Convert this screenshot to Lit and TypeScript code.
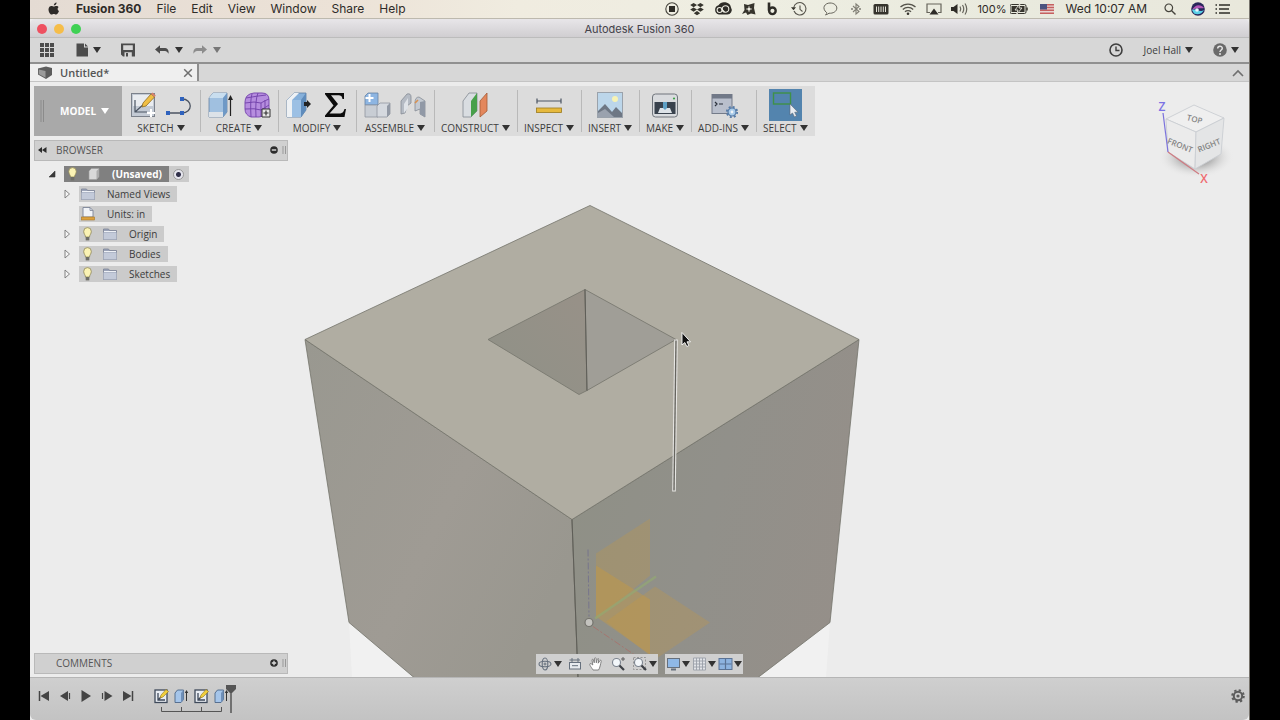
import { LitElement, html, svg, css, TemplateResult, SVGTemplateResult } from "lit";
import { customElement, state } from "lit/decorators.js";

/* Every glyph is drawn around its own centre, so (0,0) is the middle of its box. */
const icon = (w: number, h: number, body: SVGTemplateResult) =>
  html`<svg class="icon" width=${w} height=${h} viewBox="${-w / 2} ${-h / 2} ${w} ${h}" aria-hidden="true">${body}</svg>`;

const caret = html`<span class="caret"></span>`;

const apple = svg`<path fill="#2e2b28" d="M2.6-6.6C2.7-5.3 1.4-3.6-.2-3.7C-.3-5 1-6.5 2.6-6.6ZM4.6-1.9C3.2-1 3.3 1.3 5 2.1C4.4 3.8 3.2 5.6 2 5.6C1.1 5.6.8 5.1-.2 5.1C-1.200 5.100-1.600 5.600-2.400 5.600C-4 5.600-5.600 2.500-5.500.3C-5.400-1.800-4.100-3-2.600-3C-1.600-3-.9-2.400-.2-2.400C.5-2.400 1.300-3.100 2.500-3.100C3.400-3.100 4.200-2.600 4.600-1.900Z"/>`;

const status: Record<string, [number, SVGTemplateResult]> = {
  "Screen recording": [18, svg`<circle r="6.2" fill="none" stroke="#45433c" stroke-width="1.1"/><rect x="-3" y="-3" width="6" height="6" fill="#2e2c27"/>`],
  Dropbox: [16, svg`<g fill="#36342d"><path d="M-3.400-6L0-4L-3.400-1.800L-6.800-4ZM3.400-6L6.800-4L3.400-1.800L0-4ZM-3.400-1.600L0 .5L-3.400 2.700L-6.800.5ZM3.400-1.600L6.800.5L3.400 2.700L0 .5ZM0 2L3.200 4.200L0 6.200L-3.200 4.200Z"/></g><circle r="1.300" cy="-1.700" fill="#efeee4"/>`],
  "Creative Cloud": [20, svg`<path fill="#2e2c27" d="M-4 5.500A4.800 4.800 0 0 1-4.500-3.800A6.800 6.300 0 0 1 8-1.500A4.500 4.500 0 0 1 4 5.500Z"/><g fill="none" stroke="#efeee4" stroke-width="1.100"><circle cx="-3.400" cy="1" r="2.500"/><circle cx="2.500" cy="0" r="3.300"/><path d="M-1.500 0L1.500 3"/></g>`],
  Antivirus: [16, svg`<path fill="#36342d" d="M-5-5L-1-4L5.500-6L5-1L6.500 5.500L2 4.500L-1.500 6L-3 3.500L-7 5L-4.500 1Z"/><circle r="1.500" fill="#efeee4"/><path d="M0-3V3M-3 0H3" stroke="#efeee4" stroke-width=".7"/>`],
  Beats: [14, svg`<path d="M-3-6.500V1.500" stroke="#2e2c27" stroke-width="2.600"/><circle cx=".4" cy="1.800" r="3.300" fill="none" stroke="#2e2c27" stroke-width="2.400"/>`],
  "Time Machine": [24, svg`<g fill="none" stroke="#55534b" stroke-width="1.100"><path d="M-5 2A6.200 6.200 0 1 0-5.300-1.500"/><path d="M1-3.500V.3L3.500 2.500"/></g><path d="M-8-1.800H-3L-5.500 1.200Z" fill="#36342d"/>`],
  Messages: [22, svg`<path d="M-4.500 5.800C-3.500 5.300-3.200 4.700-3.200 3.800C-9-1 -5-6 0-6C4-6 6.800-3.700 6.800-.9C6.800 2.500 3 4.600-1 4.200C-2 5.200-3.200 5.700-4.500 5.800Z" fill="none" stroke="#66645b" stroke-width="1"/>`],
  Bluetooth: [14, svg`<path d="M-3-3L3 2.500L0 5V-5L3-2.500L-3 3" fill="none" stroke="#807e74" stroke-width="1.100"/><circle cx="-4" r="1" fill="#807e74"/><circle cx="4" r="1" fill="#807e74"/>`],
  Memory: [20, svg`<rect x="-7.500" y="-5" width="15" height="10.500" rx="1.500" fill="#36342d"/><path d="M-4.500-2.500V3M-2.300-2.500V3M0-2.500V3M2.300-2.500V3M4.500-2.500V3" stroke="#e5e4da" stroke-width="1"/>`],
  "Wi-Fi": [18, svg`<g fill="none" stroke="#55534b" stroke-width="1.300"><path d="M-7.500-2A11 11 0 0 1 7.500-2"/><path d="M-5.200.5A7.500 7.500 0 0 1 5.200.5"/><path d="M-3 2.800A4.200 4.200 0 0 1 3 2.800"/></g><circle cy="4.800" r="1.300" fill="#36342d"/>`],
  AirPlay: [18, svg`<path d="M-4 3.500H-7V-5H7V3.500H4" fill="none" stroke="#66645b" stroke-width="1.200"/><path d="M0-.5L4.500 5.500H-4.500Z" fill="#2e2c27"/>`],
  Volume: [18, svg`<path fill="#2e2c27" d="M-9-2H-6.500L-2.500-5V5L-6.500 2H-9Z"/><g fill="none" stroke="#66645b" stroke-width="1.200"><path d="M0-2.500Q1.500 0 0 2.500"/><path d="M2.500-4Q5 0 2.500 4"/><path d="M5-5.500Q8.500 0 5 5.500"/></g>`],
};

const battery = svg`<rect x="-9" y="-4.500" width="16" height="9" rx="1.500" fill="none" stroke="#36342d"/><rect x="-7.500" y="-3" width="13" height="6" fill="#36342d"/><path d="M8-1.500V1.500" stroke="#36342d" stroke-width="1.500"/><path d="M1-5.500L-4 1H-1L-2.500 5.500L3-1H0Z" fill="#36342d" stroke="#ecebe1" stroke-width=".9"/>`;
const flag = svg`<rect x="-7" y="-5" width="14" height="10" fill="#e8d5d2"/><path d="M-7-4.300H7M-7-1.500H7M-7 1.300H7M-7 4.200H7" stroke="#c5605f" stroke-width="1.400"/><rect x="-7" y="-5" width="7" height="5.500" fill="#4b5480"/>`;
const search = svg`<circle cx="-1.200" cy="-1.200" r="3.800" fill="none" stroke="#45433c" stroke-width="1.200"/><path d="M1.700 1.700L5.500 5.500" stroke="#45433c" stroke-width="1.400"/>`;
const siri = svg`<circle r="6.800" fill="#29265a"/><path d="M-6 1C-3-5 3-5 6-1C3 0 0-2-6 1Z" fill="#b557b8"/><path d="M-6 1C-2-1 2 4 6 1C4 5 0 6-4 4.500Z" fill="#5ad1e8"/><circle cx="-1" cy="1" r="1.800" fill="#e7f6ff"/>`;
const list = svg`<path d="M-4-4H7M-4 0H6M-4 4H7" stroke="#2e2c27" stroke-width="1.600"/><path d="M-7.500-4H-6M-7.500 0H-6M-7.500 4H-6" stroke="#2e2c27" stroke-width="1.600"/>`;

const grid = svg`<g fill="#4c4c4c">${[-7, -2, 3].map((y) => [-7, -2, 3].map((x) => svg`<rect x=${x} y=${y} width="4" height="4"/>`))}</g>`;
const file = svg`<path fill="#4c4c4c" d="M-5.500-6.500H2V-2.500H6V6.500H-5.500Z"/><path fill="#4c4c4c" d="M3-6.500L6-3.500H3Z"/>`;
const save = svg`<path fill="#4c4c4c" fill-rule="evenodd" d="M-7-6.500H7V6.500H-5L-7 4.500ZM-4.800-4.800V0H4.800V-4.800ZM-3.500 2.200V6.500H3.800V2.200Z"/><rect x="-2" y="3" width="2" height="3.500" fill="#4c4c4c"/>`;
const undo = svg`<path fill="#4c4c4c" d="M-7-.5L-2-4.800V-2H2C5.500-2 7 0 6.500 3.800C5.500 1.500 4 1 1.500 1H-2V3.800Z"/>`;
const redo = svg`<path fill="#8c8c8c" d="M7-.5L2-4.800V-2H-2C-5.500-2-7 0-6.500 3.800C-5.500 1.500-4 1-1.500 1H2V3.800Z"/>`;
const clock = svg`<circle r="6" fill="none" stroke="#3f3f3f" stroke-width="1.600"/><path d="M0-3.500V.5H3.500" fill="none" stroke="#3f3f3f" stroke-width="1.400"/>`;
const help = svg`<circle r="6.800" fill="#6a6a6a"/><path d="M-2.300-1.500C-2.300-4.600 2.300-4.500 2.300-1.700C2.300 0 0 0 0 2" fill="none" stroke="#e4e4e4" stroke-width="1.500"/><circle cy="4" r="1" fill="#e4e4e4"/>`;
const docCube = svg`<path fill="#5d5d5d" d="M-7-4.500L1-6.500L7-5V2L1 6L-7 1.500Z"/><path fill="#9b9b9b" d="M-6.200-3.500L.5-2V4.800L-6.200 1Z"/>`;
const close = svg`<path d="M-3.800-3.800L3.800 3.800M3.800-3.800L-3.800 3.800" stroke="#6f6f6f" stroke-width="1.500"/>`;
const chevron = svg`<path d="M-5 3L0-2L5 3" fill="none" stroke="#6f6f6f" stroke-width="1.600"/>`;

const sketchIcon = svg`<rect x="-11.500" y="-11.500" width="23" height="23" fill="#c3cad4" stroke="#7b818b"/><rect x="-10" y="-10" width="20" height="11" fill="#e9ecf0"/><path d="M-8-5V7H4M-8 7L1-1" fill="none" stroke="#4a5462" stroke-width="1.200"/><path d="M-1 2L0-2L8-11L11.500-8L3 1Z" fill="#f0bf45" stroke="#8d6b22" stroke-width=".8"/><path d="M8-11L11.500-8L12.800-9.500L9.500-12.500Z" fill="#d8826d"/><path d="M8 4V12M4 8H12" stroke="#fff" stroke-width="2"/>`;
const splineIcon = svg`<path d="M-10 8H3C14 8 14-6 3-6" fill="none" stroke="#4b5361" stroke-width="1.300"/><g fill="#2f62bd"><rect x="-13" y="6" width="4" height="4"/><rect x="1" y="6" width="4" height="4"/><rect x="1" y="-8" width="4" height="4"/></g>`;
const extrudeIcon = svg`<path d="M-12-7L-8-12H6V7L2 12H-12Z" fill="#a0c0e0" stroke="#6783a3" stroke-width=".8"/><path d="M-12-7L-8-12H6L2-7Z" fill="#c9deef"/><path d="M2-7L6-12V7L2 12Z" fill="#6f99c6"/><path d="M-12 7H2V12H-12Z" fill="#dce2e8"/><path d="M9.500 11V-6" stroke="#222" stroke-width="1.200"/><path d="M7-5L9.500-10L12-5Z" fill="#222"/>`;
const formIcon = svg`<path d="M-12-3Q-12-11-3-12H5Q12-12 12-5V5Q10 11 2 12H-6Q-12 10-12 4Z" fill="#b68ddf" stroke="#7c4db1"/><path d="M-12-2Q-2-4 4-2Q9-5 12-6M-12 4Q-2 3 4 5Q9 2 12 0M-5-11Q-7-5-6 12M1-12Q-2-5-1 12M4-2V12M8-5V9M-11-7Q0-9 9-10" fill="none" stroke="#6f3fa8" stroke-width=".9"/><path d="M5 4H13V12H5Z" fill="#e8e8e8" stroke="#333"/><path d="M9 5.500V10.500M6.500 8H11.500" stroke="#333" stroke-width="1.200"/>`;
const pressIcon = svg`<path d="M-12-5L-5-12H7V5L2 12H-12Z" fill="#86b0da" stroke="#5d7da2" stroke-width=".8"/><path d="M-12-5L-5-12H0L-7-5V12H-12Z" fill="#eef1f4"/><path d="M-7-5H2V12H-7Z" fill="#9cc0e4"/><path d="M2-5L7-12V5L2 12Z" fill="#5f8cbc"/><path d="M5-3H8V-5L12-1L8 3V1H5Z" fill="#222"/>`;
const sigmaIcon = svg`<path d="M-10-12H9V-6H7.500C7-9 6-9.800 3-9.800H-4L3-1L-5.500 8.500H4C7.500 8.500 8.500 7 9.500 4H11L9.500 12H-10V10.500L-1.500.5L-10-10.800Z" fill="#0c0c0c"/>`;
const assembleIcon = svg`<path d="M-12-9L-9-12H1V0H-12Z" fill="#8db5e2" stroke="#6783a3" stroke-width=".8"/><path d="M-12 0H1V12H-12Z" fill="#c8cdd4" stroke="#8f959e" stroke-width=".8"/><path d="M0 1L3-2H13V9L10 12H0Z" fill="#d5d9df" stroke="#8f959e" stroke-width=".8"/><path d="M10 1L13-2V9L10 12Z" fill="#9299a5"/><path d="M-7.500-11V-3M-11.500-7H-3.500" stroke="#fff" stroke-width="2"/>`;
const jointIcon = svg`<path d="M-12 9V-4L-6-11Q-2-12-2-8V-2L-6 1L-8 8Z" fill="#b5bbc4" stroke="#858b94" stroke-width=".8"/><path d="M-9-1L-5-7V3L-9 8Z" fill="#dfe3e8"/><path d="M2-2Q2-8 6-8L12-4V12L7 9V4L2 6Z" fill="#c4cad2" stroke="#858b94" stroke-width=".8"/><path d="M7-3L12-4V12L7 9Z" fill="#9199a6"/><path d="M2-2L5-5" stroke="#d9904f" stroke-width="1.600"/>`;
const constructIcon = svg`<path d="M-12-4L-6-12H2V6L-4 12H-12Z" fill="#d9dde1" stroke="#848a92" stroke-width=".8"/><path d="M-4-4L2-12V6L-4 12Z" fill="#48a04a"/><path d="M5-4L12-12V6L5 12Z" fill="#e3875c" stroke="#a55a36" stroke-width=".8"/>`;
const inspectIcon = svg`<path d="M-12-4H12M-12-6.500V-1.500M12-6.500V-1.500" stroke="#4a5462" stroke-width="1.200"/><rect x="-12.500" y="3" width="25" height="4.500" fill="#e6b93d" stroke="#9b7a1e" stroke-width=".8"/>`;
const insertIcon = svg`<rect x="-12.500" y="-12.500" width="25" height="25" fill="#bcd6ea" stroke="#9aa2ab"/><circle cx="5" cy="-6" r="3" fill="#f7f3b5"/><path d="M-12 6L-5-1L2 7L6 2L12 8V12H-12Z" fill="#6e7784"/><path d="M-12 8L-5 4L4 12H-12Z" fill="#9aa2ae"/>`;
const makeIcon = svg`<rect x="-12.500" y="-11" width="25" height="23" rx="3" fill="#d9dbde" stroke="#70757c"/><rect x="-10.500" y="-3" width="21" height="12" fill="#39424d"/><path d="M-7 8L-5 3H5L7 8Z" fill="#dde2e7"/><path d="M-2-3H2V3L0 5L-2 3Z" fill="#5e9fc4"/><circle cx="9" cy="-6.500" r="1.100" fill="#3ba346"/>`;
const addinsIcon = svg`<rect x="-12" y="-10.500" width="20" height="19" fill="#b9bfcc" stroke="#747b89"/><rect x="-12" y="-10.500" width="20" height="4" fill="#717988"/><path d="M-9-3L-7-1L-9 1M-5-1H-1" fill="none" stroke="#2b313b" stroke-width="1.200"/><circle cx="8" cy="7" r="4" fill="#a8cbea" stroke="#557aa6" stroke-width="1.200"/><circle cx="8" cy="7" r="5.200" fill="none" stroke="#557aa6" stroke-width="1.800" stroke-dasharray="2 2.100"/><circle cx="8" cy="7" r="1.400" fill="#f0f4f8"/>`;
const selectIcon = svg`<rect x="-11.500" y="-12" width="17" height="11" fill="none" stroke="#3f9147" stroke-width="1.400"/><path d="M5-1V10L7.500 8L9.500 12L11.500 11L9.700 7.200H13Z" fill="#e9edf2" stroke="#5b6673" stroke-width=".6"/>`;

const bulb = svg`<path d="M-2 3C-2 1-3.800 0-3.800-2.600A3.800 3.800 0 0 1 3.800-2.600C3.800 0 2 1 2 3Z" fill="#fbf3b4" stroke="#8d8557" stroke-width=".8"/><rect x="-1.800" y="3" width="3.600" height="3.400" fill="#6e6e68"/>`;
const folder = svg`<path d="M-6.500-5H-1.500L-.5-3.500H6.500V5.500H-6.500Z" fill="#9ca4b8" stroke="#7c8497" stroke-width=".8"/><path d="M-6.500-1.500H6.500V5.500H-6.500Z" fill="#c3cad9"/><path d="M-6-2.500H6" stroke="#eef1f6"/>`;
const bodyIcon = svg`<path d="M-5-3L-2.500-5.500H5V2.500L2.500 5.500H-5Z" fill="#d9d9d9" stroke="#9d9d9d" stroke-width=".6"/><path d="M2.500-3L5-5.500V2.500L2.500 5.500Z" fill="#adadad"/>`;
const units = svg`<path d="M-5-6.500H2L5-3.500V3H-5Z" fill="#f1f3f7" stroke="#7c8497" stroke-width=".9"/><path d="M2-6.500V-3.500H5" fill="none" stroke="#7c8497" stroke-width=".8"/><rect x="-6.500" y="3" width="13" height="3" fill="#dda23e" stroke="#a4752a" stroke-width=".6"/>`;
const opened = svg`<path d="M3-3V3H-3Z" fill="#3a3a3a" stroke="#3a3a3a" stroke-width=".6"/>`;
const closed = svg`<path d="M-2-4L2.500 0L-2 4Z" fill="#f4f4f4" stroke="#777" stroke-width=".9"/>`;
const rewind = svg`<path d="M-1-3V3L-5 0ZM3.500-3V3L-1 0Z" fill="#2c2c2c"/>`;
const minus = svg`<circle r="3.800" fill="#2c2c2c"/><path d="M-2.200 0H2.200" stroke="#ddd" stroke-width="1.400"/>`;
const plus = svg`<circle r="3.800" fill="#2c2c2c"/><path d="M-2.200 0H2.200M0-2.200V2.200" stroke="#ddd" stroke-width="1.300"/>`;
const grip = svg`<path d="M-1-4V4M1.500-4V4" stroke="#999" stroke-width="1"/>`;

const orbit = svg`<g fill="none" stroke="#66707d" stroke-width="1.100"><ellipse rx="6" ry="2.800"/><ellipse rx="2.800" ry="6"/></g><path d="M-1.500 0H1.500M0-1.500V1.500" stroke="#66707d"/>`;
const lookAt = svg`<rect x="-5.500" y="-1.500" width="11" height="6.500" fill="#e7eaee" stroke="#66707d"/><path d="M-5.500-4H5M-3-6V-2M3-6V-2M-3 1.700H3" stroke="#66707d" stroke-width="1"/>`;
const pan = svg`<path d="M-3 6C-4 4-7 1-6-.3C-5-.9-4 .6-3.200 1L-4-4C-3.900-5-2.800-5-2.500-4L-1.800-1.200L-1.500-5.500C-1.200-6.500-.1-6.400 0-5.500L.3-1.200L1.400-5C1.900-5.900 2.800-5.500 2.700-4.600L2.200-.8L4-3.500C4.700-4.200 5.500-3.500 5.200-2.700C4.500 0 4 4 2.500 6Z" fill="#fff" stroke="#6a6a6a" stroke-width=".8"/>`;
const lens = svg`<circle cx="-1.500" cy="-1.500" r="4" fill="#f3f7fa" stroke="#7b838e" stroke-width="1.100"/><path d="M1.500 1.500L6 6" stroke="#3d4046" stroke-width="2.200"/>`;
const zoom = svg`${lens}<path d="M3-5H7M5-7V-3" stroke="#555" stroke-width=".9"/>`;
const zoomFit = svg`<rect x="-6.500" y="-6.500" width="12" height="12" fill="none" stroke="#888" stroke-width=".8" stroke-dasharray="2 1.500"/>${lens}`;
const display = svg`<rect x="-6" y="-5.500" width="12" height="9" fill="#8fb8e6" stroke="#66707d"/><path d="M-2.500 5.500H2.500" stroke="#66707d" stroke-width="2"/>`;
const gridView = svg`<rect x="-6" y="-6" width="12" height="12" fill="#e2e4e8"/><path d="M-6-6H6M-6-3H6M-6 0H6M-6 3H6M-6 6H6M-6-6V6M-3-6V6M0-6V6M3-6V6M6-6V6" stroke="#9a9fa8" stroke-width=".9"/>`;
const viewports = svg`<rect x="-6.500" y="-5.500" width="13" height="11" fill="#8db3e0" stroke="#5b7395"/><path d="M0-5V5M-6 0H6" stroke="#5b7395" stroke-width="1.200"/>`;

const playback: [string, SVGTemplateResult][] = [
  ["Go to start", svg`<path d="M-4.500-5V5" stroke="#444" stroke-width="1.500"/><path d="M5-5V5L-3.500 0Z" fill="#444"/>`],
  ["Step back", svg`<path d="M3-5V5L-5 0Z" fill="#444"/><path d="M4.500-3V3" stroke="#444" stroke-width="1.200"/>`],
  ["Play", svg`<path d="M-4.500-6V6L5 0Z" fill="#444"/>`],
  ["Step forward", svg`<path d="M-2.500-5V5L5.500 0Z" fill="#444"/><path d="M-4.500-3V3" stroke="#444" stroke-width="1.200"/>`],
  ["Go to end", svg`<path d="M4.500-5V5" stroke="#444" stroke-width="1.500"/><path d="M-5-5V5L3.500 0Z" fill="#444"/>`],
];
const sketchStep = svg`<rect x="-6" y="-6" width="12" height="12.500" fill="#e9edf3" stroke="#3f4a5b" stroke-width="1.300"/><path d="M-3-3V4H4M-3 4L1 0" fill="none" stroke="#3f4a5b" stroke-width="1.300"/><path d="M-1 2L0-1L5-6.500L7.500-4.500L2 1Z" fill="#f0cf3d" stroke="#94761e" stroke-width=".6"/>`;
const extrudeStep = svg`<path d="M-6-3L-3.500-6H2.500V3.500L0 6.500H-6Z" fill="#a5c5ea" stroke="#4d6789" stroke-width=".9"/><path d="M0-3L2.500-6V3.500L0 6.500Z" fill="#6e8fb8"/><path d="M5.500 5V-4" stroke="#333"/><path d="M3.800-3L5.500-6L7.200-3Z" fill="#333"/>`;
const gear = svg`<circle r="4.200" fill="none" stroke="#5c5c5c" stroke-width="2"/><circle r="5.800" fill="none" stroke="#5c5c5c" stroke-width="2" stroke-dasharray="2.300 2.255"/><circle r="1.600" fill="#5c5c5c"/>`;

interface Command { label: string; icons: [string, SVGTemplateResult][]; active?: boolean; }
const commands: Command[] = [
  { label: "SKETCH", icons: [["Create sketch", sketchIcon], ["Spline", splineIcon]] },
  { label: "CREATE", icons: [["Extrude", extrudeIcon], ["Create form", formIcon]] },
  { label: "MODIFY", icons: [["Press pull", pressIcon], ["Change parameters", sigmaIcon]] },
  { label: "ASSEMBLE", icons: [["New component", assembleIcon], ["Joint", jointIcon]] },
  { label: "CONSTRUCT", icons: [["Offset plane", constructIcon]] },
  { label: "INSPECT", icons: [["Measure", inspectIcon]] },
  { label: "INSERT", icons: [["Insert canvas", insertIcon]] },
  { label: "MAKE", icons: [["3D print", makeIcon]] },
  { label: "ADD-INS", icons: [["Scripts and add-ins", addinsIcon]] },
  { label: "SELECT", icons: [["Select", selectIcon]], active: true },
];

interface Node { label: string; art: SVGTemplateResult; expands: boolean; light: boolean; }
const nodes: Node[] = [
  { label: "Named Views", art: folder, expands: true, light: false },
  { label: "Units: in", art: units, expands: false, light: false },
  { label: "Origin", art: folder, expands: true, light: true },
  { label: "Bodies", art: folder, expands: true, light: true },
  { label: "Sketches", art: folder, expands: true, light: true },
];

@customElement("app-root")
export class AppRoot extends LitElement {
  @state() private step = 4;

  static styles = css`
    :host { display: block; background: #000; color: #3c3c3c; font-family: "Open Sans", "Noto Sans", sans-serif; font-size: 10px; line-height: 14px; }
    * { box-sizing: border-box; }
    button { display: inline-flex; align-items: center; justify-content: center; padding: 0; border: 0; background: none; color: inherit; font: inherit; white-space: nowrap; }
    .icon { display: block; flex: none; }
    .caret { flex: none; border: 4px solid transparent; border-top: 6px solid #333; border-bottom: 0; }
    .faded .caret { border-top-color: #777; }
    .screen { display: flex; flex-direction: column; height: 100vh; margin: 0 30px; background: #ececec; border-right: 1px solid #77736c; }

    .menubar { display: flex; align-items: center; justify-content: space-between; height: 19px; padding: 0 17px; background: linear-gradient(90deg, #e4dbd3, #ece2d7 25%, #f0ece0 40%, #eeeee2 60%, #e9eade 80%, #e9e8dc); border-bottom: 1px solid #bdb9ae; color: #2e2b28; font-family: Inter, sans-serif; font-size: 12px; line-height: 16px; }
    .menus, .status, .power { display: flex; align-items: center; white-space: nowrap; }
    .menus { gap: 15px; }
    .status { gap: 8px; }
    .power { gap: 3px; }
    .percent { font-size: 11px; }
    .menus strong { font-weight: 700; }
    .search { padding: 0 5px 0 8px; }

    .titlebar { display: grid; grid-template-columns: 1fr auto 1fr; align-items: center; height: 19px; padding: 1px 7px 0; background: linear-gradient(#e8e6e9, #d0ced1); border-bottom: 1px solid #bcbcbc; border-radius: 5px 5px 0 0; font-family: Inter, sans-serif; font-size: 11px; color: #43414a; }
    .titlebar h1 { margin: 0; font-size: inherit; font-weight: 400; }
    .lights { display: flex; gap: 7px; }
    .light { width: 10px; height: 10px; border-radius: 50%; }
    .red { background: #ee5060; }
    .amber { background: #f5bd4a; }
    .green { background: #3fd154; }

    .quickbar { display: flex; align-items: center; justify-content: space-between; height: 26px; padding: 0 10px 0 9px; background: #d7d7d7; border-bottom: 2px solid #909090; }
    .tools { display: flex; align-items: center; gap: 20px; }
    .tools button { gap: 4px; }
    .steps-back { display: flex; gap: 10px; }
    .steps-back button { gap: 6px; }
    .account { display: flex; align-items: center; gap: 20px; }
    .account button { gap: 4px; }

    .tabs { display: flex; align-items: stretch; justify-content: space-between; height: 18px; background: #d7d7d7; border-bottom: 1px solid #c4c4c4; }
    .tab { display: flex; align-items: center; justify-content: space-between; width: 169px; padding: 0 4px 0 8px; background: #efefef; border-right: 2px solid #8e8e8e; }
    .tab-name { display: flex; align-items: center; gap: 8px; font-size: 11px; font-weight: 600; color: #555; }
    .fold { padding: 0 4px; }

    .viewport { position: relative; flex: 1; min-height: 0; display: flex; flex-direction: column; align-items: flex-start; padding: 4px 4px 3px; border-bottom: 1px solid #b5b5b5; }
    .model { position: absolute; inset: 0; width: 100%; height: 100%; }
    .viewport > :not(.model) { z-index: 1; }
    .cube { position: absolute; top: 8px; right: 10px; }

    .ribbon { display: flex; height: 50px; background: #dcdcdc; }
    .workspace { width: 88px; gap: 5px; background: #a9a9a9; color: #fff; font-weight: 700; justify-content: flex-start; padding-left: 6px; }
    .workspace .caret { border-top-color: #fff; }
    .workspace .name { padding-left: 11px; }
    .group { display: flex; flex-direction: column; align-items: center; justify-content: space-between; padding: 3px 7px 2px; }
    .group + .group { background: linear-gradient(#b9b9b9, #b9b9b9) left center / 1px 42px no-repeat; }
    .icons { display: flex; gap: 8px; }
    .icons button { height: 32px; min-width: 28px; }
    .icons .active { width: 33px; background: #5384ae; }
    .group .label { gap: 3px; }

    .panel { display: flex; align-items: center; gap: 8px; width: 254px; height: 21px; padding: 0 0 1px 3px; background: #d0d0d0; border: 1px solid #b9b9b9; color: #555; }
    .panel h2 { flex: 1; margin: 0; font-size: 10px; font-weight: 400; }
    .panel .lead { width: 10px; }
    .panel .ends { display: flex; gap: 2px; }
    .browser { margin-top: 4px; }

    .tree { display: flex; flex-direction: column; gap: 4px; margin: 5px 0 0; padding: 0 0 0 12px; list-style: none; }
    .tree li { display: flex; align-items: center; height: 16px; }
    .child { padding-left: 15px; }
    .arrow { width: 12px; margin-right: 6px; }
    .chip { display: flex; align-items: center; gap: 9px; height: 16px; padding: 0 7px 0 2px; background: #cbcbcb; }
    .root .chip { background: #808080; color: #fff; font-weight: 700; }
    .chip .icon + span { padding-left: 3px; }
    .activate { display: flex; align-items: center; height: 16px; padding: 0 5px 0 4px; background: #cbcbcb; }
    .activate input { appearance: none; width: 11px; height: 11px; margin: 0; border: 1px solid #999; border-radius: 50%; background: radial-gradient(#30304a 0 2px, #e6e6ee 3px); }

    .dock { display: grid; grid-template-columns: 1fr auto 1fr; align-items: center; width: 100%; margin-top: auto; }
    .navs { display: flex; gap: 7px; }
    .nav { display: flex; align-items: center; gap: 6px; height: 20px; padding: 0 1px; background: #d0d0d0; }
    .nav button { gap: 1px; }
    .nav.views { gap: 2px; }

    .timeline { display: flex; align-items: center; justify-content: space-between; height: 42px; padding: 0 4px 6px 8px; background: linear-gradient(#cfcfcf, #c3c3c3); border-radius: 0 0 6px 6px; }
    .transport { display: flex; gap: 9px; }
    .left { display: flex; align-items: center; gap: 17px; }
    .history { display: flex; align-items: flex-start; padding-top: 6px; }
    .steps { display: grid; grid-template-columns: repeat(4, 20px); padding-top: 3px; }
    .bracket { grid-column: 1 / -1; }
    .marker { margin-left: -6px; }
  `;

  private menubar(): TemplateResult {
    return html`<header class="menubar">
      <nav class="menus" aria-label="Application menu">
        <button aria-label="Apple menu">${icon(14, 14, apple)}</button>
        <button><strong>Fusion 360</strong></button>
        ${["File", "Edit", "View", "Window", "Share", "Help"].map((m) => html`<button>${m}</button>`)}
      </nav>
      <div class="status">
        ${Object.entries(status).map(([name, [w, art]]) => html`<button aria-label=${name}>${icon(w, 16, art)}</button>`)}
        <span class="power"><span class="percent">100%</span>${icon(18, 12, battery)}</span>
        ${icon(22, 12, flag)}
        <span>Wed 10:07 AM</span>
        <button class="search" aria-label="Spotlight">${icon(14, 14, search)}</button>
        <button aria-label="Siri">${icon(16, 16, siri)}</button>
        <button aria-label="Notification Center">${icon(18, 14, list)}</button>
      </div>
    </header>`;
  }

  private quickbar(): TemplateResult {
    return html`<div class="quickbar">
      <div class="tools">
        <button aria-label="Data panel">${icon(16, 16, grid)}</button>
        <button aria-label="File">${icon(14, 14, file)}${caret}</button>
        <button aria-label="Save">${icon(14, 14, save)}</button>
        <div class="steps-back">
          <button aria-label="Undo">${icon(14, 14, undo)}${caret}</button>
          <button class="faded" aria-label="Redo">${icon(14, 14, redo)}${caret}</button>
        </div>
      </div>
      <div class="account">
        <button aria-label="Job status">${icon(16, 16, clock)}</button>
        <button>Joel Hall${caret}</button>
        <button aria-label="Help">${icon(14, 14, help)}${caret}</button>
      </div>
    </div>`;
  }

  private model(): TemplateResult {
    return html`<svg class="model" viewBox="30 82 1219 596" preserveAspectRatio="xMidYMid slice" role="img" aria-label="Cube with a square hole">
      <defs>
        <linearGradient id="left" x1="0" y1="0" x2="1" y2=".6"><stop offset="0" stop-color="#999890"/><stop offset=".6" stop-color="#9f9b94"/><stop offset="1" stop-color="#99978f"/></linearGradient>
        <linearGradient id="right" x1="0" y1=".3" x2="1" y2=".6"><stop offset="0" stop-color="#8f9086"/><stop offset=".5" stop-color="#91908a"/><stop offset="1" stop-color="#958f89"/></linearGradient>
        <linearGradient id="holeLeft" x1="0" y1="1" x2="1" y2="0"><stop offset="0" stop-color="#8f9187"/><stop offset="1" stop-color="#989188"/></linearGradient>
      </defs>
      <path d="M349 623L352 678H826L830 623Z" fill="#f1f1f1"/>
      <g stroke="#74736b" stroke-width=".8" stroke-linejoin="round">
        <path d="M305 340L572 520L578 678H414L349 623Z" fill="url(#left)"/>
        <path d="M859 340L572 520L578 678H758L830 623Z" fill="url(#right)"/>
        <path d="M590 206L859 340L572 520L305 340Z" fill="#b0ada2"/>
        <path d="M585 290L488 340L579 395L587 391Z" fill="url(#holeLeft)"/>
        <path d="M585 290L676 340L587 391Z" fill="#a09e97"/>
      </g>
      <path d="M585 290L587 391M572 520L578 678" stroke="#5f5e58"/>
      <g fill="#d39c32" fill-opacity=".24">
        <path d="M596 554L650 519V576L596 620Z"/>
        <path d="M596 566L650 600V655L596 617Z" fill-opacity=".34"/>
        <path d="M606 622L655 587L710 623L655 660Z"/>
      </g>
      <path d="M595 619L656 577" stroke="#93a873" stroke-width="2.400" stroke-opacity=".7"/>
      <path d="M588 550L589 617" stroke="#77758c" stroke-dasharray="7 2 2 2"/>
      <path d="M593 627L634 655" stroke="#a57670" stroke-dasharray="7 2 2 2"/>
      <circle cx="589" cy="623" r="4" fill="#c4c3be" stroke="#73726c" stroke-width="1.200"/>
      <path d="M676 340L674 492" stroke="#e6e5e2" stroke-width="3.600"/>
      <path d="M676 341L674 491" stroke="#66655f" stroke-width="1.400"/>
      <path d="M682 333V345.500L684.800 343L686.800 347L688.800 346L687 342.300H690.500Z" fill="#111" stroke="#fff" stroke-width=".9"/>
    </svg>`;
  }

  private cube(): TemplateResult {
    return html`<svg class="cube" width="84" height="100" viewBox="1155 90 84 100" role="img" aria-label="View cube">
      <defs><radialGradient id="shade"><stop offset=".4" stop-color="#b0b0b0"/><stop offset="1" stop-color="#ececec" stop-opacity="0"/></radialGradient></defs>
      <ellipse cx="1196" cy="157" rx="38" ry="21" fill="url(#shade)"/>
      <g stroke="#cbced2" stroke-width=".9" stroke-linejoin="round">
        <path d="M1194 105L1224 118L1196 132L1166 119Z" fill="#efefef"/>
        <path d="M1166 119L1196 132L1195 169L1168 152Z" fill="#ebebeb"/>
        <path d="M1224 118L1196 132L1195 169L1221 154Z" fill="#e4e5e6"/>
      </g>
      <path d="M1163 113L1168 152" stroke="#7b72dc" stroke-width="1.200"/>
      <path d="M1168 152L1199 174" stroke="#cf7b82" stroke-width="1.200"/>
      <g font-family="Open Sans, sans-serif" font-size="8" font-weight="600" fill="#858585" text-anchor="middle">
        <text transform="translate(1194 122) rotate(14)">TOP</text>
        <text transform="translate(1179 148) rotate(22)">FRONT</text>
        <text transform="translate(1210 148) rotate(-22)">RIGHT</text>
      </g>
      <g font-family="Open Sans, sans-serif" font-size="12" font-weight="600" text-anchor="middle">
        <text x="1162" y="111" fill="#7b72e4">Z</text><text x="1204" y="183" fill="#ef6a70">X</text>
      </g>
    </svg>`;
  }

  private ribbon(): TemplateResult {
    return html`<div class="ribbon" role="toolbar">
      <button class="workspace">${icon(4, 22, svg`<path d="M-1-11V11M1.500-11V11" stroke="#8b8b8b"/>`)}<span class="name">MODEL</span>${caret}</button>
      ${commands.map((c) => html`<div class="group">
        <div class="icons">${c.icons.map(([name, art]) => html`<button class=${c.active ? "active" : ""} aria-label=${name}>${icon(28, 28, art)}</button>`)}</div>
        <button class="label">${c.label}${caret}</button>
      </div>`)}
    </div>`;
  }

  private tree(): TemplateResult {
    return html`<ul class="tree">
      <li class="root">
        <button class="arrow" aria-label="Collapse">${icon(10, 10, opened)}</button>
        <span class="chip">${icon(13, 14, bulb)}${icon(12, 12, bodyIcon)}<span>(Unsaved)</span></span>
        <label class="activate"><input type="radio" name="active" checked aria-label="Activate component" /></label>
      </li>
      ${nodes.map((n) => html`<li class="child">
        <button class="arrow" aria-label="Expand">${n.expands ? icon(10, 10, closed) : ""}</button>
        <span class="chip">${n.light ? icon(13, 14, bulb) : ""}${icon(14, 14, n.art)}<span>${n.label}</span></span>
      </li>`)}
    </ul>`;
  }

  private dock(): TemplateResult {
    return html`<div class="dock">
      <section class="panel"><span class="lead"></span><h2>COMMENTS</h2>
        <span class="ends"><button aria-label="Add comment">${icon(10, 10, plus)}</button>${icon(6, 10, grip)}</span></section>
      <div class="navs">
        <div class="nav">
          <button aria-label="Orbit">${icon(16, 14, orbit)}${caret}</button>
          <button aria-label="Look at">${icon(14, 14, lookAt)}</button>
          <button aria-label="Pan">${icon(16, 14, pan)}</button>
          <button aria-label="Zoom">${icon(16, 14, zoom)}</button>
          <button aria-label="Fit">${icon(16, 14, zoomFit)}${caret}</button>
        </div>
        <div class="nav views">
          <button aria-label="Display settings">${icon(15, 14, display)}${caret}</button>
          <button aria-label="Grid and snaps">${icon(15, 14, gridView)}${caret}</button>
          <button aria-label="Viewports">${icon(15, 14, viewports)}${caret}</button>
        </div>
      </div>
    </div>`;
  }

  private timeline(): TemplateResult {
    return html`<footer class="timeline">
      <div class="left">
        <div class="transport">${playback.map(([name, art]) => html`<button aria-label=${name}>${icon(12, 14, art)}</button>`)}</div>
        <div class="history">
          <div class="steps">
            ${[sketchStep, extrudeStep, sketchStep, extrudeStep].map((art, i) => html`<button aria-label="Feature ${i + 1}" @click=${() => (this.step = i + 1)}>${icon(16, 16, art)}</button>`)}
            <svg class="bracket icon" width="80" height="10" viewBox="0 0 80 10" aria-hidden="true"><path d="M10.500 3V7.500H70.500V3M30.500 3V7M50.500 3V7" fill="none" stroke="#555"/></svg>
          </div>
          <span class="marker">${icon(12, 28, svg`<path d="M-5-14H5V-10L1-6H-1L-5-10Z" fill="#555"/><path d="M0-8V14" stroke="#555" stroke-width="1.500"/>`)}</span>
        </div>
      </div>
      <button aria-label="Timeline settings">${icon(14, 14, gear)}</button>
    </footer>`;
  }

  render() {
    return html`<div class="screen">
      ${this.menubar()}
      <div class="titlebar">
        <div class="lights"><button class="light red" aria-label="Close"></button><button class="light amber" aria-label="Minimise"></button><button class="light green" aria-label="Full screen"></button></div>
        <h1>Autodesk Fusion 360</h1>
      </div>
      ${this.quickbar()}
      <div class="tabs">
        <div class="tab"><span class="tab-name">${icon(14, 14, docCube)}Untitled*</span><button aria-label="Close tab">${icon(10, 10, close)}</button></div>
        <button class="fold" aria-label="Collapse toolbar">${icon(14, 10, chevron)}</button>
      </div>
      <main class="viewport">
        ${this.model()} ${this.ribbon()}
        <section class="panel browser"><button class="lead" aria-label="Hide browser">${icon(10, 10, rewind)}</button><h2>BROWSER</h2>
          <span class="ends"><button aria-label="Collapse browser">${icon(10, 10, minus)}</button>${icon(6, 10, grip)}</span></section>
        ${this.tree()} ${this.cube()} ${this.dock()}
      </main>
      ${this.timeline()}
    </div>`;
  }
}
